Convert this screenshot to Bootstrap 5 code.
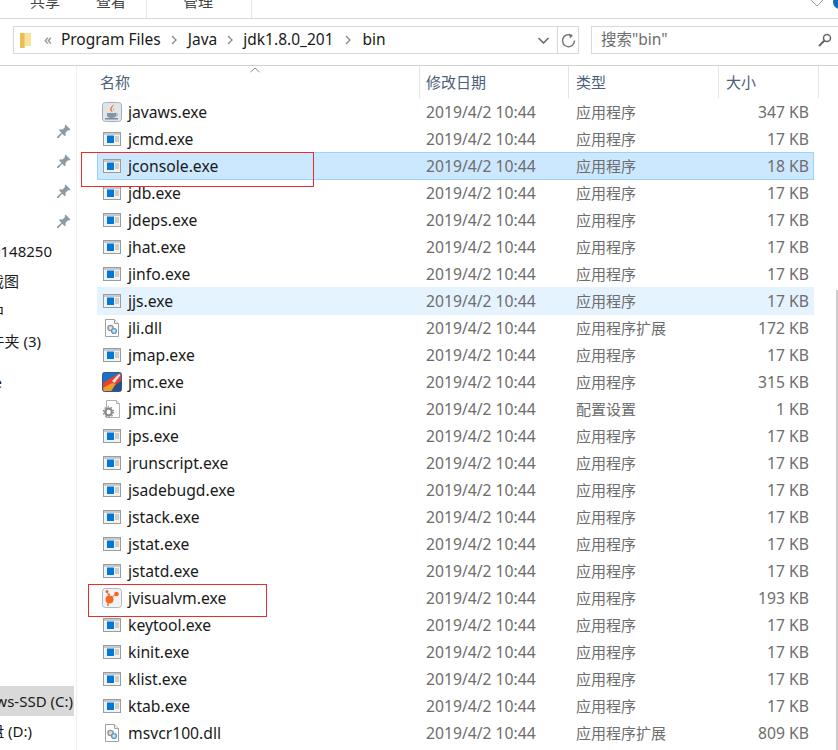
<!DOCTYPE html>
<html lang="zh-CN">
<head>
    <meta charset="UTF-8">
    <meta name="viewport" content="width=device-width, initial-scale=1.0">
    <title>bin</title>
    <link href="https://cdn.jsdelivr.net/npm/bootstrap@5.3.2/dist/css/bootstrap.min.css" rel="stylesheet">
    <style>
        html, body { height: 750px; overflow: hidden; }
        body { position: relative; font-family: "Noto Sans", "Noto Sans CJK SC", sans-serif; font-size: 15px; color: #1a1a1a; background: #fff; }

        .tab-strip { height: 19px; border-bottom: 1px solid #d9d9d9; overflow: hidden; color: #444; }
        .tab-strip span { line-height: 20px; margin-top: -9px; }
        .tab-one { margin-left: 30px; }
        .tab-two { margin-left: 36px; }
        .tab-three { margin-left: 36px; }
        .tab-line { width: 1px; height: 18px; background: #e6e6e6; }
        .tab-line-a { margin-left: 20px; }
        .tab-line-b { margin-left: 38px; }
        .tab-chevron { flex: none; }
        .tab-dot { width: 14px; height: 14px; flex: none; border-radius: 50%; background: #0f6cbd; margin: -5px -9px 0 9px; }

        .addr-row { height: 47px; padding: 7px 0 0 13px; border-bottom: 1px solid #cfcfcf; }
        .addr-box, .search-box { height: 28px; border: 1px solid #d9d9d9; flex: none; font-size: 15.5px; }
        .addr-box { width: 566px; }
        .addr-folder { margin-left: 5px; }
        .addr-back { color: #8a8a8a; margin: 0 9px 0 11px; }
        .arrow-a { margin: 0 9.5px; }
        .arrow-b { margin: 0 9px; }
        .arrow-c { margin: 0 10.5px; }
        .addr-end { width: 21px; height: 100%; border-left: 1px solid #d9d9d9; }
        .search-box { width: 260px; margin-left: 12px; padding-left: 9px; color: #6d6d6d; border-right: 0; }
        .search-glass { margin-right: 19px; }

        .side-pane { width: 77px; height: 684px; border-right: 1px solid #f0f0f0; padding-top: 50px; flex: none; }
        .side-item { height: 30px; overflow: hidden; white-space: nowrap; }
        .side-pin { padding-right: 4px; }
        .side-active { background: #d9d9d9; width: 74px; padding-right: 1px; }
        .side-a { padding-right: 24px; }
        .side-b { padding-right: 57px; }
        .side-c { padding-right: 72px; }
        .side-d { padding-right: 35px; }
        .side-e { padding-right: 74px; margin-top: 11px; }
        .side-f { margin-top: 289px; }
        .side-g { padding-right: 44px; }

        .list-pane { padding-left: 20px; width: 740px; }
        .list-head { height: 32px; color: #4c607a; position: relative; }
        .head-cell { border-right: 1px solid #e5e5e5; height: 32px; line-height: 32px; flex: none; }
        .head-name { width: 323px; padding-left: 3px; }
        .head-date { width: 149px; padding-left: 6px; }
        .head-type { width: 150px; padding-left: 7px; }
        .head-size { width: 100px; padding-left: 7px; }
        .sort-mark { position: absolute; left: 153px; top: 1px; }

        .file-row { height: 28px; margin-bottom: -1px; width: 717px; border: 1px solid transparent; color: #6d6d6d; font-size: 15.7px; }
        .file-row.is-sel { background: #cce8ff; border-color: #99d1ff; }
        .file-row.is-hover { background: #e5f3ff; border-color: #e5f3ff; }
        .file-name { width: 328px; padding-left: 4px; gap: 6px; color: #1a1a1a; }
        .file-name span, .file-date, .file-size { padding-top: 2px; }
        .file-date { width: 150px; }
        .file-type { width: 150px; font-size: 15px; }
        .file-size { width: 83px; text-align: right; }
        .file-icon { width: 20px; height: 20px; flex: none; }

        .red-box { position: absolute; border: 1px solid #ee2b2b; }
        .red-one { left: 81px; top: 152px; width: 233px; height: 35px; }
        .red-two { left: 88px; top: 584px; width: 179px; height: 33px; }
        .scroll-thumb { position: absolute; right: 0; top: 290px; width: 2px; height: 460px; background: #cdcdcd; }
    </style>
</head>
<body>
    <svg width="0" height="0" class="position-absolute">
        <symbol id="ico-exe" viewBox="0 0 20 20">
            <rect x="1.500" y="3.500" width="17" height="13" fill="#f2f2f2" stroke="#9c9c9c"/>
            <rect x="2" y="4" width="16" height="2" fill="#c9c9c9"/>
            <rect x="5" y="6.500" width="7" height="7.500" fill="#0078d7"/>
            <path d="M13 8h4M13 10h4M13 12h4" stroke="#a8a8a8"/>
        </symbol>
        <symbol id="ico-java" viewBox="0 0 20 20">
            <rect x=".5" y=".5" width="19" height="19" rx="3" fill="#e4e4e4" stroke="#9fb2c4"/>
            <path d="M11 2c1.500 2.500-2.500 3.500-1.200 6.500.3 1 1 1.800 1 1.800-3-1-3-3.300-1.800-5 1-1.200 2-2 2-3.300z" fill="#dd6a1f"/>
            <path d="M13.500 5c-1.700 1-2.200 2.300-1.400 4-1.500-1.200-.8-3 1.400-4z" fill="#dd6a1f"/>
            <path d="M5 11h9v2.500c0 1.500-1.500 2.500-4.500 2.500S5 15 5 13.500z" fill="#7f95a9"/>
            <path d="M14 11.500c2 0 2 2.500-.5 2.500" fill="none" stroke="#7f95a9"/>
            <path d="M3 16.800h13" stroke="#5f7488" stroke-width="1.200"/>
        </symbol>
        <symbol id="ico-dll" viewBox="0 0 20 20">
            <path d="M3.500 1.500h9l4 4v13h-13z" fill="#fff" stroke="#a0a0a0"/>
            <path d="M12.500 1.500v4h4" fill="#eee" stroke="#a0a0a0"/>
            <circle cx="8.500" cy="10" r="2.600" fill="#ddd" stroke="#929292" stroke-width="1.400"/>
            <circle cx="12" cy="13" r="2.400" fill="#cfe4f7" stroke="#5b9bd5" stroke-width="1.400"/>
        </symbol>
        <symbol id="ico-ini" viewBox="0 0 20 20">
            <path d="M4.500 1.500h10l3 3v14h-13z" fill="#fff" stroke="#b0b0b0"/>
            <path d="M14.500 1.500v3h3" fill="#eee" stroke="#b0b0b0"/>
            <circle cx="6.500" cy="13" r="3.400" fill="none" stroke="#8c8c8c" stroke-width="2.200"/>
            <circle cx="6.500" cy="13" r="5.100" fill="none" stroke="#8c8c8c" stroke-width="1.200" stroke-dasharray="1.600 1.600"/>
        </symbol>
        <symbol id="ico-jmc" viewBox="0 0 20 20">
            <rect x=".5" y=".5" width="19" height="19" rx="2" fill="#1f6fc4" stroke="#2a5a96"/>
            <path d="M1 11 12 4l7-3v8L9 19H1z" fill="#e8422a"/>
            <path d="M1 16l9-5 4 1-5 7H2z" fill="#f59a23"/>
            <path d="M10 9l7-7 1.500 1-6 8z" fill="#e8e8e8"/>
            <path d="M13 13l6-4v10h-9z" fill="#2b4e86"/>
        </symbol>
        <symbol id="ico-visual" viewBox="0 0 20 20">
            <rect x=".5" y=".5" width="19" height="19" rx="3" fill="#f3f3f3" stroke="#a7bccf"/>
            <path d="M5 3.500 8 11l6-5.500M8 11l-2 5" stroke="#f26a21" fill="none"/>
            <circle cx="7.500" cy="11.500" r="4" fill="#f26a21"/>
            <circle cx="14.500" cy="6" r="2.300" fill="#f26a21"/>
            <circle cx="5" cy="3.500" r="1.500" fill="#f26a21"/>
            <circle cx="7" cy="6.500" r="1" fill="#f26a21"/>
            <circle cx="6" cy="17" r="1" fill="#f26a21"/>
        </symbol>
        <symbol id="ico-pin" viewBox="0 0 16 16">
            <path d="M9.500 1.500l5 5-1.500 1-1-.3-2.500 2.500.2 2.500-1 1-2.500-2.500L2.500 15 1 15l.2-1.500 4.300-3.700L3 7.300l1-1 2.500.2L9 4l-.3-1z" fill="#8b9aa5"/>
        </symbol>
        <symbol id="ico-arrow" viewBox="0 0 8 10">
            <path d="M2 1l4 4-4 4" fill="none" stroke="#8a8a8a" stroke-width="1.300"/>
        </symbol>
    </svg>

    <div class="tab-strip d-flex align-items-start">
        <span class="tab-one">共享</span>
        <span class="tab-two">查看</span>
        <div class="tab-line tab-line-a"></div>
        <span class="tab-three">管理</span>
        <div class="tab-line tab-line-b"></div>
        <svg class="tab-chevron ms-auto" width="14" height="9" viewBox="0 0 14 9"><path d="M1 0l6 6 6-6" fill="none" stroke="#9a9a9a"/></svg>
        <div class="tab-dot"></div>
    </div>

    <div class="addr-row d-flex align-items-start">
        <div class="addr-box d-flex align-items-center">
            <svg class="addr-folder" width="14" height="18" viewBox="0 0 14 18">
                <path d="M1 2h5v15H1z" fill="#f2cf72"/><path d="M6 2h6v13H6z" fill="#f9e29c"/><path d="M1 2h4v15H3l-2-1z" fill="#e9bd55"/>
            </svg>
            <span class="addr-back">«</span>
            <span>Program Files</span>
            <svg class="arrow-a" width="8" height="10"><use href="#ico-arrow"/></svg>
            <span>Java</span>
            <svg class="arrow-b" width="8" height="10"><use href="#ico-arrow"/></svg>
            <span>jdk1.8.0_201</span>
            <svg class="arrow-c" width="8" height="10"><use href="#ico-arrow"/></svg>
            <span>bin</span>
            <svg class="ms-auto me-2" width="11" height="7" viewBox="0 0 11 7"><path d="M.5 1l5 5 5-5" fill="none" stroke="#666" stroke-width="1.500"/></svg>
            <div class="addr-end d-flex align-items-center justify-content-center">
                <svg width="15" height="15" viewBox="0 0 15 15"><path d="M10.500 2.500A6 6 0 1 0 13.500 7.500" fill="none" stroke="#777" stroke-width="1.500"/><path d="M8 .5l4 2-3 3z" fill="#777"/></svg>
            </div>
        </div>
        <div class="search-box d-flex align-items-center">
            <span>搜索"bin"</span>
            <svg class="search-glass ms-auto" width="14" height="14" viewBox="0 0 14 14"><circle cx="9" cy="5" r="3.500" fill="none" stroke="#666" stroke-width="1.500"/><path d="M6.500 7.500 1 13" stroke="#666" stroke-width="2"/></svg>
        </div>
    </div>

    <div class="d-flex">
        <div class="side-pane">
            <div class="side-item side-pin d-flex align-items-center justify-content-end"><svg width="16" height="16"><use href="#ico-pin"/></svg></div>
            <div class="side-item side-pin d-flex align-items-center justify-content-end"><svg width="16" height="16"><use href="#ico-pin"/></svg></div>
            <div class="side-item side-pin d-flex align-items-center justify-content-end"><svg width="16" height="16"><use href="#ico-pin"/></svg></div>
            <div class="side-item side-pin d-flex align-items-center justify-content-end"><svg width="16" height="16"><use href="#ico-pin"/></svg></div>
            <div class="side-item side-a d-flex align-items-center justify-content-end">0148250</div>
            <div class="side-item side-b d-flex align-items-center justify-content-end">截图</div>
            <div class="side-item side-c d-flex align-items-center justify-content-end">中</div>
            <div class="side-item side-d d-flex align-items-center justify-content-end">文件夹 (3)</div>
            <div class="side-item side-e d-flex align-items-center justify-content-end">e</div>
            <div class="side-item side-active side-f d-flex align-items-center justify-content-end">Windows-SSD (C:)</div>
            <div class="side-item side-g d-flex align-items-center justify-content-end">本地磁盘 (D:)</div>
        </div>

        <div class="list-pane">
            <div class="list-head d-flex">
                <div class="head-cell head-name">名称</div>
                <div class="head-cell head-date">修改日期</div>
                <div class="head-cell head-type">类型</div>
                <div class="head-cell head-size">大小</div>
                <svg class="sort-mark" width="10" height="6" viewBox="0 0 10 6"><path d="M.5 5 5 1l4.500 4" fill="none" stroke="#8a8a8a"/></svg>
            </div>
            <div id="file-list"></div>
        </div>
    </div>

    <div class="red-box red-one"></div>
    <div class="red-box red-two"></div>
    <div class="scroll-thumb"></div>

    <script src="https://cdn.jsdelivr.net/npm/bootstrap@5.3.2/dist/js/bootstrap.bundle.min.js"></script>
    <script>
        const app = '应用程序';
        const ext = '应用程序扩展';
        const files = [
            ['javaws.exe', 'java', app, '347 KB'],
            ['jcmd.exe', 'exe', app, '17 KB'],
            ['jconsole.exe', 'exe', app, '18 KB', 'is-sel'],
            ['jdb.exe', 'exe', app, '17 KB'],
            ['jdeps.exe', 'exe', app, '17 KB'],
            ['jhat.exe', 'exe', app, '17 KB'],
            ['jinfo.exe', 'exe', app, '17 KB'],
            ['jjs.exe', 'exe', app, '17 KB', 'is-hover'],
            ['jli.dll', 'dll', ext, '172 KB'],
            ['jmap.exe', 'exe', app, '17 KB'],
            ['jmc.exe', 'jmc', app, '315 KB'],
            ['jmc.ini', 'ini', '配置设置', '1 KB'],
            ['jps.exe', 'exe', app, '17 KB'],
            ['jrunscript.exe', 'exe', app, '17 KB'],
            ['jsadebugd.exe', 'exe', app, '17 KB'],
            ['jstack.exe', 'exe', app, '17 KB'],
            ['jstat.exe', 'exe', app, '17 KB'],
            ['jstatd.exe', 'exe', app, '17 KB'],
            ['jvisualvm.exe', 'visual', app, '193 KB'],
            ['keytool.exe', 'exe', app, '17 KB'],
            ['kinit.exe', 'exe', app, '17 KB'],
            ['klist.exe', 'exe', app, '17 KB'],
            ['ktab.exe', 'exe', app, '17 KB'],
            ['msvcr100.dll', 'dll', ext, '809 KB']
        ];

        document.getElementById('file-list').innerHTML = files.map(f => `
            <div class="file-row d-flex align-items-center ${f[4] || ''}">
                <div class="file-name d-flex align-items-center">
                    <svg class="file-icon"><use href="#ico-${f[1]}"/></svg>
                    <span>${f[0]}</span>
                </div>
                <div class="file-date">2019/4/2 10:44</div>
                <div class="file-type">${f[2]}</div>
                <div class="file-size">${f[3]}</div>
            </div>`).join('');
    </script>
</body>
</html>
